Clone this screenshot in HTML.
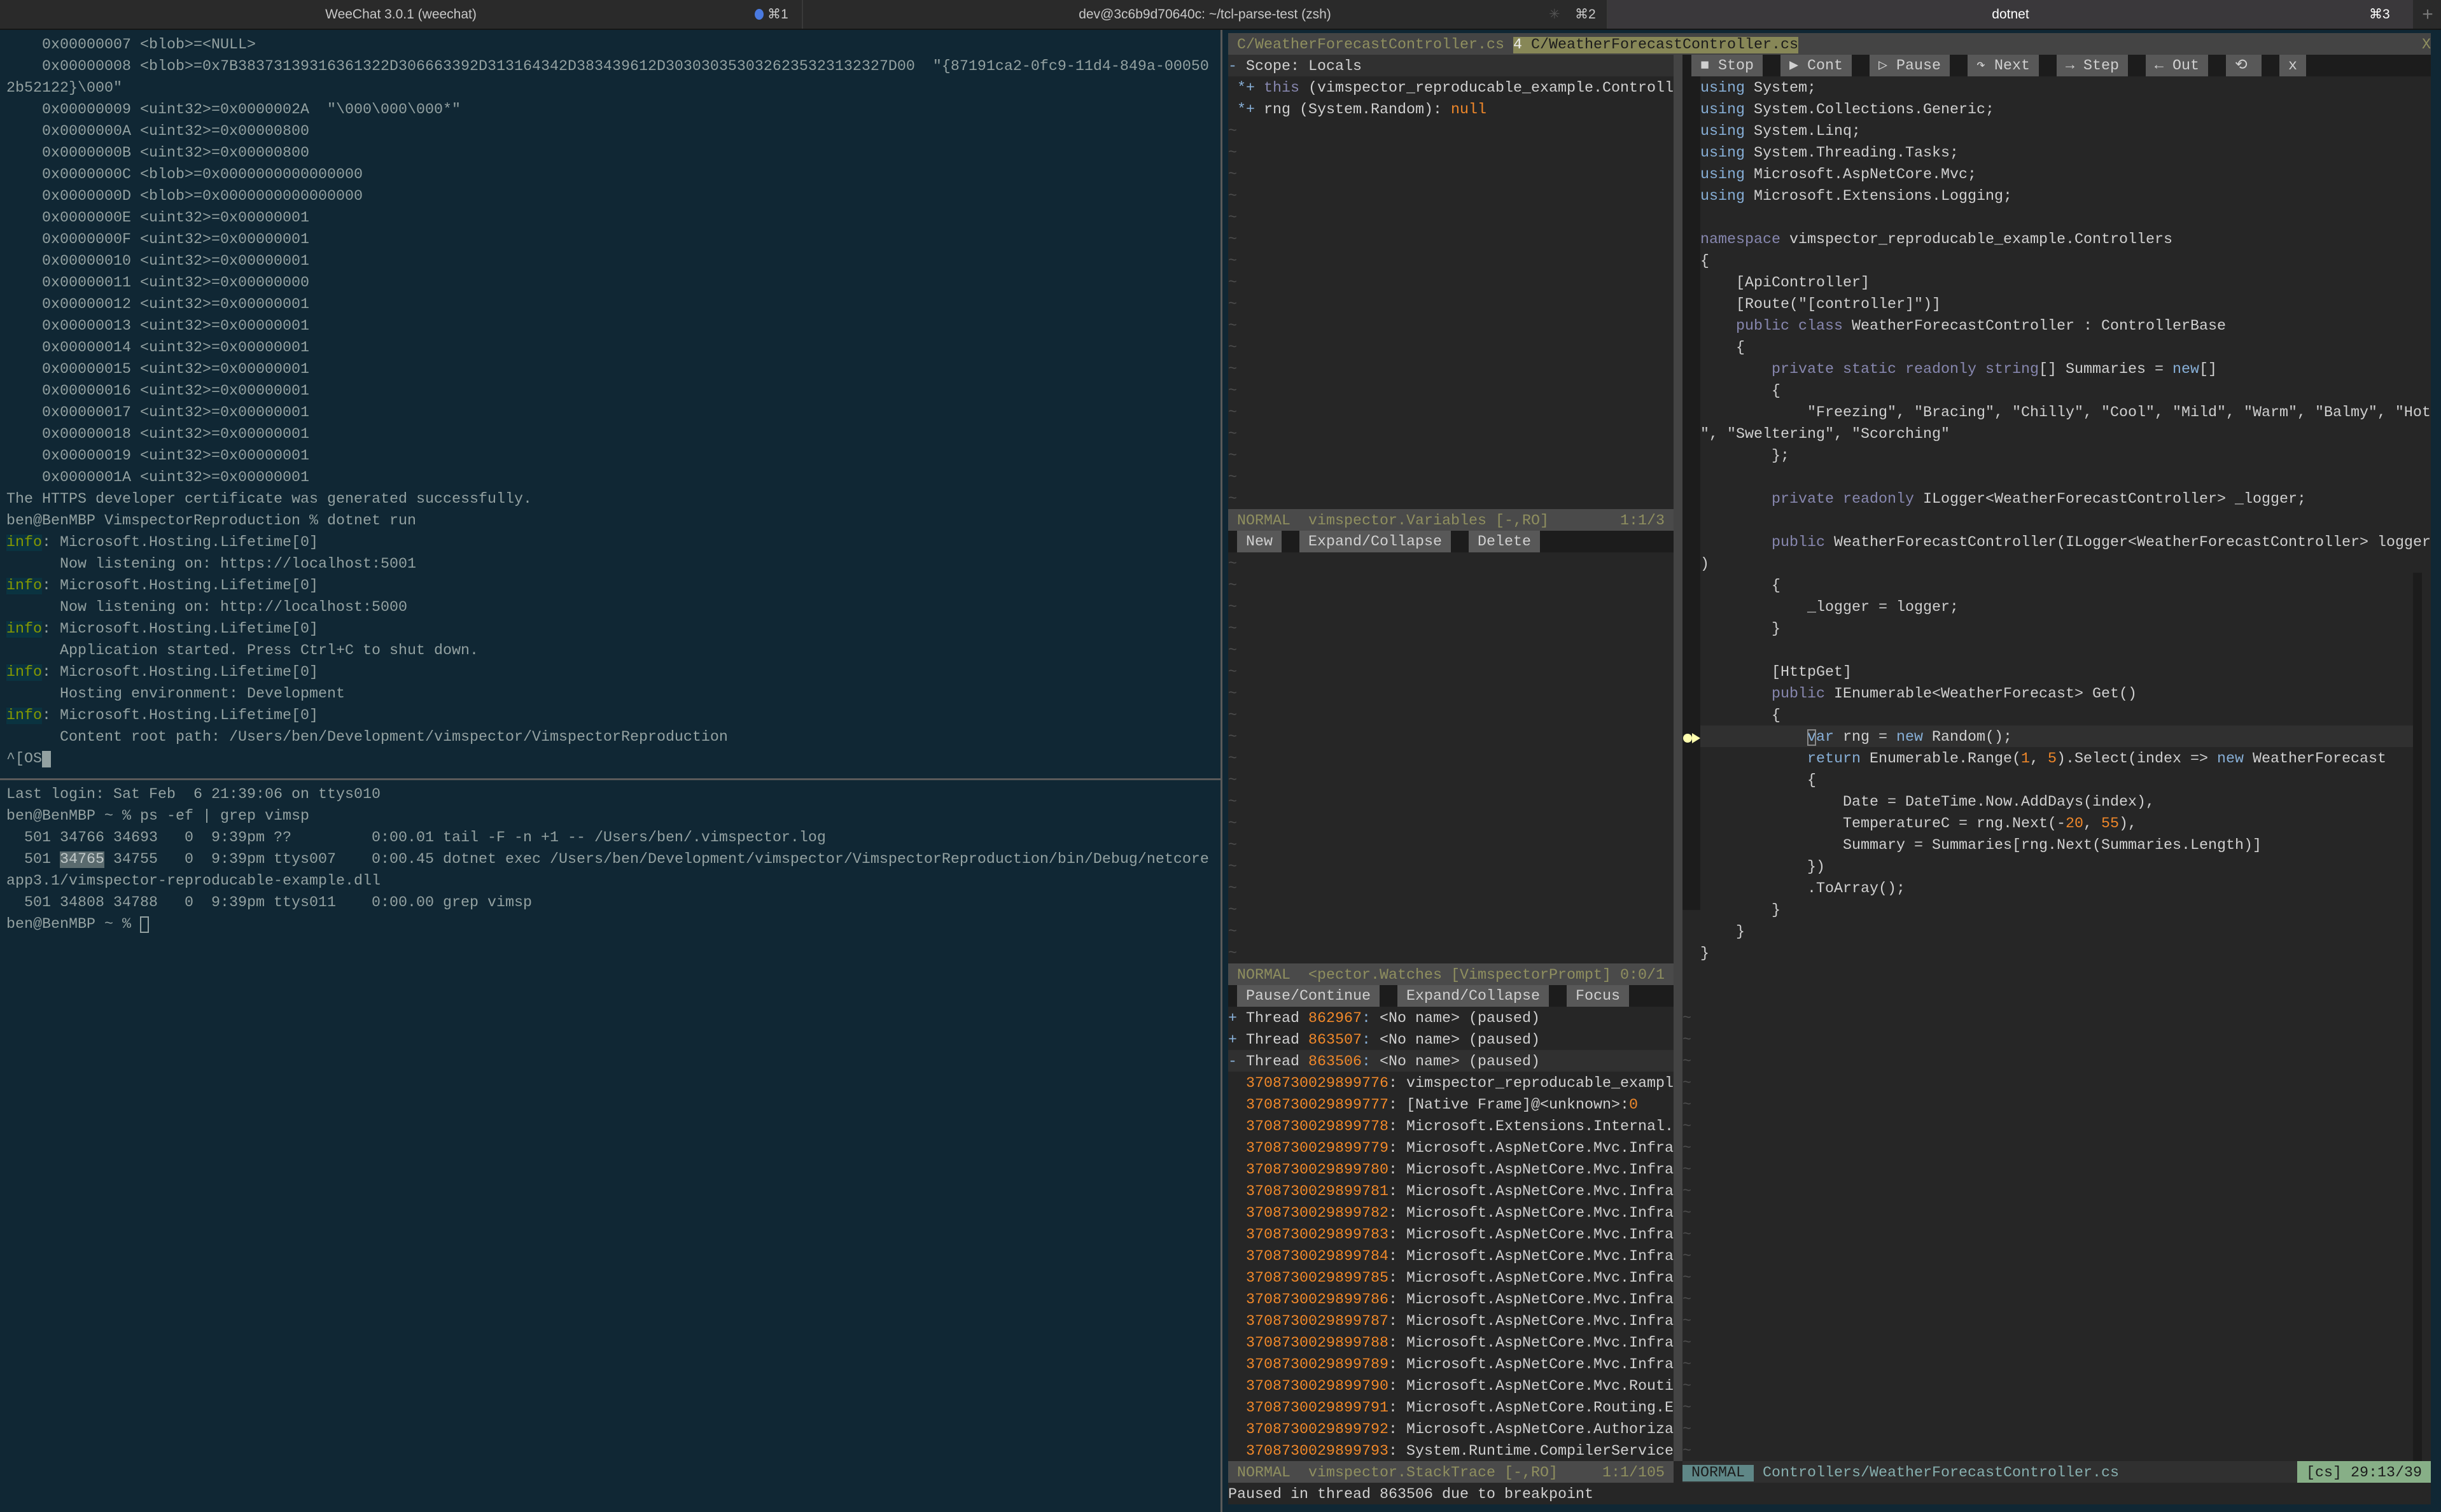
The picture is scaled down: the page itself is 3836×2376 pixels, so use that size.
<!DOCTYPE html>
<html><head><meta charset="utf-8"><style>
*{margin:0;padding:0;box-sizing:border-box}
body{width:3836px;height:2376px;background:#102734;position:relative;overflow:hidden;font-family:"Liberation Mono",monospace;font-size:23.33px;color:#93a1a1}
.abs{position:absolute}
pre{font-family:"Liberation Mono",monospace;font-size:23.33px;line-height:34px;white-space:pre;margin:2px 0 0 0}
.tabbar{left:0;top:0;width:3836px;height:47px;background:#2a2a2a;border-bottom:2px solid #161616;font-family:"Liberation Sans",sans-serif;font-size:21px;color:#c8c8c8}
.tab{position:absolute;top:0;height:45px;line-height:45px;text-align:center}
.g{color:#859900;background:#0a3340}
.hl{background:#5a6a6e;color:#c0c8c8}
.v{color:#d0d0d0}
.b{color:#87afd7}.p{color:#8787af}.o{color:#f0882a}.t{color:#4e4e4e}
.st{background:#4a4a4a;color:#8f8f5f}
.btn{position:absolute;height:34px;background:#585858;color:#d0d0d0;line-height:36px;white-space:pre;font-size:23.33px}
</style></head><body>
<div class="abs tabbar">
 <div class="tab" style="left:0;width:1262px;border-right:2px solid #3a3a3a">WeeChat 3.0.1 (weechat)<span style="position:absolute;left:1186px;top:14px;width:14px;height:17px;border-radius:50%;background:#4a7ae0"></span><span style="position:absolute;left:1206px">⌘1</span></div>
 <div class="tab" style="left:1262px;width:1265px;border-right:2px solid #3a3a3a">dev@3c6b9d70640c: ~/tcl-parse-test (zsh)<span style="position:absolute;left:1172px;color:#555">✳</span><span style="position:absolute;left:1213px">⌘2</span></div>
 <div class="tab" style="left:2527px;width:1265px;background:#3a383b;color:#fff">dotnet<span style="position:absolute;left:1196px">⌘3</span></div>
 <div class="tab" style="left:3794px;width:42px;color:#777;font-size:30px">+</div>
</div>
<div class="abs" style="left:1918px;top:47px;width:3px;height:2329px;background:#5a5a5a"></div>
<div class="abs" style="left:0;top:1223px;width:1918px;height:3px;background:#5a5a5a"></div>
<pre class="abs" style="left:10px;top:52px;width:1905px;height:1170px;overflow:hidden">    0x00000007 &lt;blob&gt;=&lt;NULL&gt;
    0x00000008 &lt;blob&gt;=0x7B38373139316361322D306663392D313164342D383439612D3030303530326235323132327D00  "{87191ca2-0fc9-11d4-849a-00050
2b52122}\000"
    0x00000009 &lt;uint32&gt;=0x0000002A  "\000\000\000*"
    0x0000000A &lt;uint32&gt;=0x00000800
    0x0000000B &lt;uint32&gt;=0x00000800
    0x0000000C &lt;blob&gt;=0x0000000000000000
    0x0000000D &lt;blob&gt;=0x0000000000000000
    0x0000000E &lt;uint32&gt;=0x00000001
    0x0000000F &lt;uint32&gt;=0x00000001
    0x00000010 &lt;uint32&gt;=0x00000001
    0x00000011 &lt;uint32&gt;=0x00000000
    0x00000012 &lt;uint32&gt;=0x00000001
    0x00000013 &lt;uint32&gt;=0x00000001
    0x00000014 &lt;uint32&gt;=0x00000001
    0x00000015 &lt;uint32&gt;=0x00000001
    0x00000016 &lt;uint32&gt;=0x00000001
    0x00000017 &lt;uint32&gt;=0x00000001
    0x00000018 &lt;uint32&gt;=0x00000001
    0x00000019 &lt;uint32&gt;=0x00000001
    0x0000001A &lt;uint32&gt;=0x00000001
The HTTPS developer certificate was generated successfully.
ben@BenMBP VimspectorReproduction % dotnet run
<span class="g">info</span>: Microsoft.Hosting.Lifetime[0]
      Now listening on: https://localhost:5001
<span class="g">info</span>: Microsoft.Hosting.Lifetime[0]
      Now listening on: http://localhost:5000
<span class="g">info</span>: Microsoft.Hosting.Lifetime[0]
      Application started. Press Ctrl+C to shut down.
<span class="g">info</span>: Microsoft.Hosting.Lifetime[0]
      Hosting environment: Development
<span class="g">info</span>: Microsoft.Hosting.Lifetime[0]
      Content root path: /Users/ben/Development/vimspector/VimspectorReproduction
^[OS<span style="background:#93a1a1"> </span></pre>
<pre class="abs" style="left:10px;top:1230px;width:1905px;overflow:hidden">Last login: Sat Feb  6 21:39:06 on ttys010
ben@BenMBP ~ % ps -ef | grep vimsp
  501 34766 34693   0  9:39pm ??         0:00.01 tail -F -n +1 -- /Users/ben/.vimspector.log
  501 <span class="hl">34765</span> 34755   0  9:39pm ttys007    0:00.45 dotnet exec /Users/ben/Development/vimspector/VimspectorReproduction/bin/Debug/netcore
app3.1/vimspector-reproducable-example.dll
  501 34808 34788   0  9:39pm ttys011    0:00.00 grep vimsp
ben@BenMBP ~ % <span style="outline:2px solid #93a1a1;outline-offset:-2px"> </span></pre>

<!-- vim -->
<div class="abs" style="left:1930px;top:52px;width:1890px;height:2312px;background:#262626"></div>
<div class="abs" style="left:1930px;top:52px;width:1890px;height:34px;background:#444"></div>
<pre class="abs" style="left:1930px;top:52px;color:#8f8f5f"> C/WeatherForecastController.cs <span style="background:#878757;color:#1c1c1c"><span style="color:#eee">4</span> C/WeatherForecastController.cs</span></pre>
<pre class="abs" style="left:3806px;top:52px;color:#8f8f5f">X</pre>
<!-- left panes -->
<div class="abs" style="left:1930px;top:86px;width:700px;height:34px;background:#303030"></div>
<pre class="abs v" style="left:1930px;top:86px;width:700px;overflow:hidden"><span class="b">-</span> Scope: Locals
 <span class="b">*+</span> <span class="p">this</span> (vimspector_reproducable_example.Controll
 <span class="b">*+</span> rng (System.Random): <span class="o">null</span>
<span class="t">~
~
~
~
~
~
~
~
~
~
~
~
~
~
~
~
~
~</span></pre>
<div class="abs st" style="left:1930px;top:800px;width:700px;height:34px"></div>
<pre class="abs" style="left:1930px;top:800px;color:#8f8f5f"> NORMAL  vimspector.Variables [-,RO]        1:1/3</pre>
<div class="abs" style="left:1930px;top:834px;width:700px;height:34px;background:#1c1c1c"></div>
<div class="btn" style="left:1944px;top:834px;width:70px"> New</div>
<div class="btn" style="left:2042px;top:834px;width:238px"> Expand/Collapse</div>
<div class="btn" style="left:2308px;top:834px;width:112px"> Delete</div>
<pre class="abs t" style="left:1930px;top:868px">~
~
~
~
~
~
~
~
~
~
~
~
~
~
~
~
~
~
~</pre>
<div class="abs st" style="left:1930px;top:1514px;width:700px;height:34px"></div>
<pre class="abs" style="left:1930px;top:1514px;color:#8f8f5f"> NORMAL  &lt;pector.Watches [VimspectorPrompt] 0:0/1</pre>
<div class="abs" style="left:1930px;top:1548px;width:700px;height:34px;background:#1c1c1c"></div>
<div class="btn" style="left:1944px;top:1548px;width:224px"> Pause/Continue</div>
<div class="btn" style="left:2196px;top:1548px;width:238px"> Expand/Collapse</div>
<div class="btn" style="left:2462px;top:1548px;width:98px"> Focus</div>
<div class="abs" style="left:1930px;top:1650px;width:700px;height:34px;background:#303030"></div>
<pre class="abs v" style="left:1930px;top:1582px;width:700px;overflow:hidden"><span class="b">+</span> Thread <span class="o">862967</span><span class="b">:</span> &lt;No name&gt; (paused)
<span class="b">+</span> Thread <span class="o">863507</span><span class="b">:</span> &lt;No name&gt; (paused)
<span class="b">-</span> Thread <span class="o">863506</span><span class="b">:</span> &lt;No name&gt; (paused)
  <span class="o">3708730029899776</span>: vimspector_reproducable_exampl
  <span class="o">3708730029899777</span>: [Native Frame]@&lt;unknown&gt;:<span class="o">0</span>
  <span class="o">3708730029899778</span>: Microsoft.Extensions.Internal.
  <span class="o">3708730029899779</span>: Microsoft.AspNetCore.Mvc.Infra
  <span class="o">3708730029899780</span>: Microsoft.AspNetCore.Mvc.Infra
  <span class="o">3708730029899781</span>: Microsoft.AspNetCore.Mvc.Infra
  <span class="o">3708730029899782</span>: Microsoft.AspNetCore.Mvc.Infra
  <span class="o">3708730029899783</span>: Microsoft.AspNetCore.Mvc.Infra
  <span class="o">3708730029899784</span>: Microsoft.AspNetCore.Mvc.Infra
  <span class="o">3708730029899785</span>: Microsoft.AspNetCore.Mvc.Infra
  <span class="o">3708730029899786</span>: Microsoft.AspNetCore.Mvc.Infra
  <span class="o">3708730029899787</span>: Microsoft.AspNetCore.Mvc.Infra
  <span class="o">3708730029899788</span>: Microsoft.AspNetCore.Mvc.Infra
  <span class="o">3708730029899789</span>: Microsoft.AspNetCore.Mvc.Infra
  <span class="o">3708730029899790</span>: Microsoft.AspNetCore.Mvc.Routi
  <span class="o">3708730029899791</span>: Microsoft.AspNetCore.Routing.E
  <span class="o">3708730029899792</span>: Microsoft.AspNetCore.Authoriza
  <span class="o">3708730029899793</span>: System.Runtime.CompilerService</pre>
<div class="abs st" style="left:1930px;top:2296px;width:700px;height:34px"></div>
<pre class="abs" style="left:1930px;top:2296px;color:#8f8f5f"> NORMAL  vimspector.StackTrace [-,RO]     1:1/105</pre>
<pre class="abs v" style="left:1930px;top:2330px">Paused in thread 863506 due to breakpoint</pre>
<!-- separator -->
<div class="abs" style="left:2630px;top:86px;width:14px;height:2210px;background:#444"></div>
<!-- code window -->
<div class="abs" style="left:2644px;top:86px;width:1176px;height:34px;background:#1c1c1c"></div>
<div class="btn" style="left:2658px;top:86px;width:112px"> ■ Stop</div>
<div class="btn" style="left:2798px;top:86px;width:112px"> ▶ Cont</div>
<div class="btn" style="left:2938px;top:86px;width:126px"> ▷ Pause</div>
<div class="btn" style="left:3092px;top:86px;width:112px"> ↷ Next</div>
<div class="btn" style="left:3232px;top:86px;width:112px"> → Step</div>
<div class="btn" style="left:3372px;top:86px;width:98px"> ← Out</div>
<div class="btn" style="left:3498px;top:86px;width:56px"> ⟲</div>
<div class="btn" style="left:3582px;top:86px;width:42px"> x</div>
<div class="abs" style="left:2644px;top:120px;width:28px;height:1310px;background:#1c1c1c"></div>
<div class="abs" style="left:3792px;top:900px;width:14px;height:1396px;background:#1c1c1c"></div>
<div class="abs" style="left:2672px;top:1140px;width:1120px;height:34px;background:#303030"></div>
<svg class="abs" style="left:2644px;top:1140px" width="28" height="34"><circle cx="8" cy="20" r="7" fill="#ffffaf"/><polygon points="15,12 28,20 15,28" fill="#ffffaf"/></svg>
<pre class="abs v" style="left:2672px;top:120px;width:1148px;overflow:hidden"><span class="b">using</span> System;
<span class="b">using</span> System.Collections.Generic;
<span class="b">using</span> System.Linq;
<span class="b">using</span> System.Threading.Tasks;
<span class="b">using</span> Microsoft.AspNetCore.Mvc;
<span class="b">using</span> Microsoft.Extensions.Logging;

<span class="p">namespace</span> vimspector_reproducable_example.Controllers
{
    [ApiController]
    [Route("[controller]")]
    <span class="p">public class</span> WeatherForecastController : ControllerBase
    {
        <span class="p">private static readonly string</span>[] Summaries = <span class="b">new</span>[]
        {
            "Freezing", "Bracing", "Chilly", "Cool", "Mild", "Warm", "Balmy", "Hot
", "Sweltering", "Scorching"
        };

        <span class="p">private readonly</span> ILogger&lt;WeatherForecastController&gt; _logger;

        <span class="p">public</span> WeatherForecastController(ILogger&lt;WeatherForecastController&gt; logger
)
        {
            _logger = logger;
        }

        [HttpGet]
        <span class="p">public</span> IEnumerable&lt;WeatherForecast&gt; Get()
        {
            <span class="b" style="outline:2px solid #8a8a8a;outline-offset:-2px">v</span><span class="b">ar</span> rng = <span class="b">new</span> Random();
            <span class="b">return</span> Enumerable.Range(<span class="o">1</span>, <span class="o">5</span>).Select(index =&gt; <span class="b">new</span> WeatherForecast
            {
                Date = DateTime.Now.AddDays(index),
                TemperatureC = rng.Next(-<span class="o">20</span>, <span class="o">55</span>),
                Summary = Summaries[rng.Next(Summaries.Length)]
            })
            .ToArray();
        }
    }
}</pre>
<pre class="abs t" style="left:2644px;top:1582px">~
~
~
~
~
~
~
~
~
~
~
~
~
~
~
~
~
~
~
~
~
~</pre>
<div class="abs" style="left:2644px;top:2296px;width:1176px;height:34px;background:#303030"></div>
<pre class="abs" style="left:2644px;top:2296px"><span style="background:#5f8787;color:#1c1c1c"> NORMAL </span> <span style="color:#87afaf">Controllers/WeatherForecastController.cs</span></pre>
<div class="abs" style="left:3610px;top:2296px;background:#87af87;width:210px;height:34px"></div>
<pre class="abs" style="left:3610px;top:2296px;color:#1c1c1c"> [cs] 29:13/39</pre>
</body></html>
